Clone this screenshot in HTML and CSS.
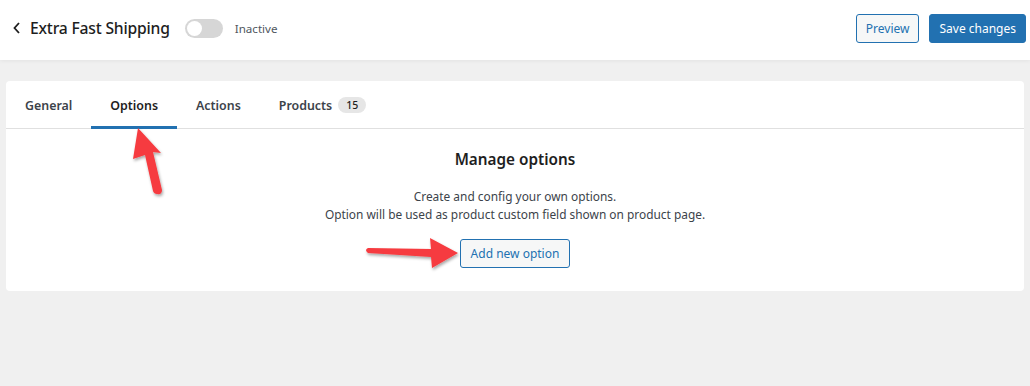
FILE: index.html
```html
<!DOCTYPE html>
<html>
<head>
<meta charset="utf-8">
<link rel="stylesheet" href="styles.css">
</head>
<body>
<header class="topbar">
  <div class="topbar-left">
    <svg class="back" width="10" height="14" viewBox="0 0 10 14"><path d="M7 2 L2.5 7 L7 12" fill="none" stroke="#1e1e1e" stroke-width="1.8"/></svg>
    <h1 class="title">Extra Fast Shipping</h1>
    <span class="toggle"><span class="knob"></span></span>
    <span class="status">Inactive</span>
  </div>
  <div class="topbar-right">
    <button class="btn btn-secondary">Preview</button>
    <button class="btn btn-primary">Save changes</button>
  </div>
</header>
<main class="content">
  <section class="card">
    <nav class="tabs">
      <a class="tab">General</a>
      <a class="tab active">Options</a>
      <a class="tab">Actions</a>
      <a class="tab">Products <span class="badge">15</span></a>
    </nav>
    <div class="panel">
      <h2 class="panel-title">Manage options</h2>
      <p class="panel-text">Create and config your own options.<br>Option will be used as product custom field shown on product page.</p>
      <button class="btn btn-secondary btn-add">Add new option</button>
    </div>
  </section>
</main>
<svg class="arrows" width="1030" height="386" viewBox="0 0 1030 386">
  <defs>
    <filter id="sh" x="-30%" y="-30%" width="160%" height="160%">
      <feDropShadow dx="1" dy="2" stdDeviation="1.5" flood-color="#000" flood-opacity="0.35"/>
    </filter>
  </defs>
  <g filter="url(#sh)" fill="#f63b3f">
    <path d="M138 128 L161 153 L153 152 L162 190 Q162 195 157 194 Q154 194 153 191 L145 155 L133 159 Z"/>
    <path d="M458 253 L430 238 L431 249 L368 248 Q364 250 368 253 L431 257 L432 268 Z"/>
  </g>
</svg>
</body>
</html>
```

FILE: styles.css
```css
* { box-sizing: border-box; }
html, body { margin: 0; padding: 0; }
body {
  width: 1030px;
  height: 386px;
  background: #f0f0f0;
  font-family: "Noto Sans", "Open Sans", sans-serif;
  color: #1e1e1e;
  position: relative;
  overflow: hidden;
}
.topbar {
  height: 60px;
  background: #fff;
  display: flex;
  align-items: center;
  justify-content: space-between;
  padding: 0 4px 4px 12px;
  box-shadow: 0 1px 4px rgba(0,0,0,0.06);
}
.topbar-left { display: flex; align-items: center; }
.back { margin-right: 8px; }
.title {
  font-size: 15.7px;
  font-weight: 500;
  margin: 0 15px 0 0;
  color: #1e1e1e;
  letter-spacing: -0.2px;
}
.toggle {
  width: 38px;
  height: 19px;
  border-radius: 10px;
  background: #d6d6d6;
  position: relative;
  margin-right: 12px;
}
.knob {
  position: absolute;
  left: 2px;
  top: 2px;
  width: 15px;
  height: 15px;
  border-radius: 50%;
  background: #fff;
}
.status { font-size: 11.6px; color: #50575e; }
.topbar-right { display: flex; gap: 10px; align-items: center; }
.btn {
  font-family: inherit;
  font-size: 12px;
  height: 29px;
  padding: 0 9px;
  border-radius: 3px;
  cursor: pointer;
}
.btn-secondary {
  background: #f6f7f7;
  border: 1px solid #2271b1;
  color: #2271b1;
}
.btn-primary {
  background: #2271b1;
  border: 1px solid #2271b1;
  color: #fff;
}
.content { padding: 21px 6px 0 6px; }
.card {
  background: #fff;
  border-radius: 4px;
  height: 210px;
}
.tabs {
  display: flex;
  height: 48px;
  border-bottom: 1px solid #e0e0e0;
  padding-left: 0;
}
.tab {
  display: flex;
  align-items: center;
  font-size: 12.4px;
  font-weight: 600;
  color: #3c434a;
  padding: 0 19px;
  border-bottom: 3px solid transparent;
  padding-top: 3px;
  height: 48px;
}
.tab.active { color: #1e1e1e; border-bottom-color: #2271b1; }
.badge {
  display: inline-block;
  margin-left: 6px;
  background: #e6e6e6;
  border-radius: 9px;
  font-size: 10.5px;
  font-weight: 500;
  padding: 1px 8px;
  color: #1e1e1e;
}
.panel {
  display: flex;
  flex-direction: column;
  align-items: center;
  padding-top: 20px;
}
.panel-title {
  margin: 0;
  font-size: 15.3px;
  font-weight: 600;
  color: #1e1e1e;
}
.panel-text {
  margin: 18px 0 0 0;
  font-size: 11.9px;
  line-height: 18px;
  text-align: center;
  color: #3c434a;
}
.btn-add { margin-top: 16px; height: 29px; padding: 0 10px; }
.arrows { position: absolute; left: 0; top: 0; pointer-events: none; }
```
